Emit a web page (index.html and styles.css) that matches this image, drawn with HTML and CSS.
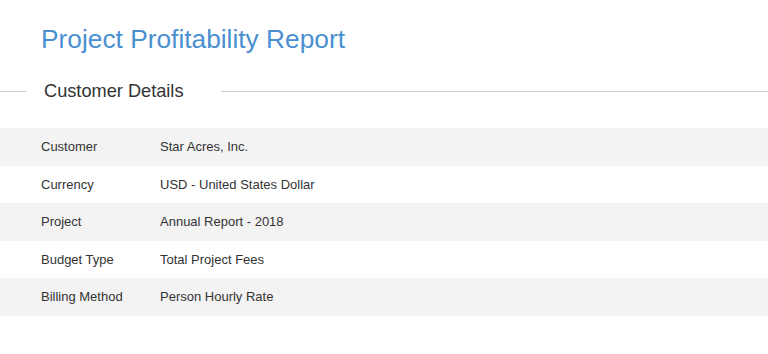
FILE: index.html
```html
<!DOCTYPE html>
<html>
<head>
<meta charset="utf-8">
<link rel="stylesheet" href="styles.css">
</head>
<body>
<div class="page">
  <h1 class="title">Project Profitability Report</h1>
  <div class="section-head">
    <span class="rule rule-left"></span>
    <h2 class="section-title">Customer Details</h2>
    <span class="rule rule-right"></span>
  </div>
  <div class="details">
    <div class="row"><div class="label">Customer</div><div class="value">Star Acres, Inc.</div></div>
    <div class="row"><div class="label">Currency</div><div class="value">USD - United States Dollar</div></div>
    <div class="row"><div class="label">Project</div><div class="value">Annual Report - 2018</div></div>
    <div class="row"><div class="label">Budget Type</div><div class="value">Total Project Fees</div></div>
    <div class="row"><div class="label">Billing Method</div><div class="value">Person Hourly Rate</div></div>
  </div>
</div>
</body>
</html>
```

FILE: styles.css
```css
html, body {
  margin: 0;
  padding: 0;
  background: #ffffff;
  font-family: "Liberation Sans", Arial, sans-serif;
  color: #333333;
}
.page {
  padding-top: 21px;
}
.title {
  margin: 0 0 0 41px;
  font-size: 26.3px;
  font-weight: normal;
  color: #4a8fcf;
  line-height: 36px;
}
.section-head {
  display: flex;
  align-items: center;
  margin-top: 22px;
  height: 24px;
}
.rule {
  height: 1px;
  background: #cccccc;
}
.rule-left {
  width: 26px;
}
.rule-right {
  flex: 1;
}
.section-title {
  margin: 0;
  padding: 0 38px 0 18px;
  font-size: 18.2px;
  font-weight: normal;
  color: #333333;
  line-height: 24px;
}
.details {
  margin-top: 25px;
}
.row {
  display: flex;
  align-items: center;
  height: 37.5px;
  font-size: 13px;
}
.row:nth-child(odd) {
  background: #f3f3f3;
}
.label {
  width: 119px;
  padding-left: 41px;
}
.value {
  flex: 1;
}
```
